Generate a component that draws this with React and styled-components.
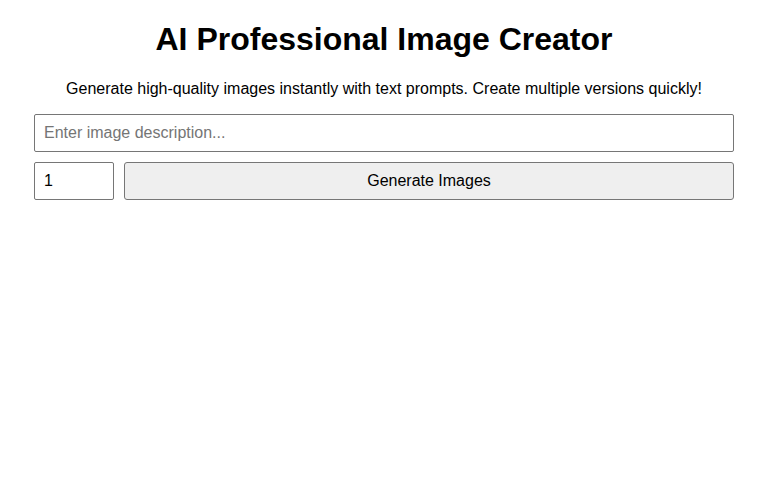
import React from "react";
import styled, { createGlobalStyle } from "styled-components";

const Global = createGlobalStyle`
  html, body { margin: 0; padding: 0; background: #fff; }
  body { font-family: "Liberation Sans", Arial, sans-serif; color: #000; }
`;

const Page = styled.div`
  max-width: 700px;
  margin: 0 auto;
  padding-top: 21px;
  text-align: center;
`;

const Title = styled.h1`
  margin: 0;
  font-size: 32px;
  line-height: 37px;
  font-weight: 700;
`;

const Subtitle = styled.p`
  margin: 22px 0 16px;
  font-size: 16px;
  line-height: 18px;
`;

const Form = styled.div`
  display: flex;
  flex-direction: column;
  gap: 10px;
`;

const Row = styled.div`
  display: flex;
  gap: 10px;
`;

const Field = styled.input`
  box-sizing: border-box;
  height: 38px;
  width: ${(p) => p.$w || "100%"};
  flex: ${(p) => (p.$w ? "0 0 auto" : "1 1 auto")};
  padding: 0 9px;
  border: 1px solid #767676;
  border-radius: 2px;
  font-family: "Liberation Sans", Arial, sans-serif;
  font-size: 16px;
  color: #000;
  background: #fff;
  outline: none;
  &::placeholder { color: #757575; }
`;

const Button = styled.button`
  flex: 1 1 auto;
  box-sizing: border-box;
  height: 38px;
  border: 1px solid #767676;
  border-radius: 3px;
  background: #efefef;
  font-family: "Liberation Sans", Arial, sans-serif;
  font-size: 16px;
  color: #000;
  cursor: pointer;
`;

export default function App() {
  return (
    <>
      <Global />
      <Page>
        <Title>AI Professional Image Creator</Title>
        <Subtitle>
          Generate high-quality images instantly with text prompts. Create multiple versions quickly!
        </Subtitle>
        <Form>
          <Field type="text" placeholder="Enter image description..." />
          <Row>
            <Field type="number" $w="80px" defaultValue={1} />
            <Button>Generate Images</Button>
          </Row>
        </Form>
      </Page>
    </>
  );
}
